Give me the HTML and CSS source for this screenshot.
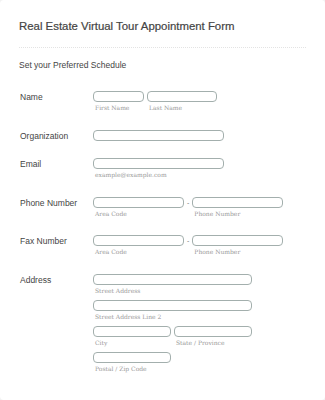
FILE: index.html
```html
<!DOCTYPE html>
<html lang="en">
<head>
  <meta charset="UTF-8">
  <title>Real Estate Virtual Tour Appointment Form</title>
  <link rel="stylesheet" href="styles.css">
</head>
<body>
  <div class="form-card">
    <h1 class="form-title">Real Estate Virtual Tour Appointment Form</h1>
    <hr class="divider">
    <p class="section-title">Set your Preferred Schedule</p>

    <div class="field">
      <label class="label">Name</label>
      <div class="inputs">
        <div class="line">
          <div class="sub">
            <span class="box w50"></span>
            <span class="hint">First Name</span>
          </div>
          <div class="sub">
            <span class="box w70"></span>
            <span class="hint">Last Name</span>
          </div>
        </div>
      </div>
    </div>

    <div class="field">
      <label class="label">Organization</label>
      <div class="inputs">
        <span class="box w130"></span>
      </div>
    </div>

    <div class="field">
      <label class="label">Email</label>
      <div class="inputs">
        <div class="sub">
          <span class="box w130"></span>
          <span class="hint">example@example.com</span>
        </div>
      </div>
    </div>

    <div class="field">
      <label class="label">Phone Number</label>
      <div class="inputs">
        <div class="line">
          <div class="sub">
            <span class="box w90"></span>
            <span class="hint">Area Code</span>
          </div>
          <span class="dash">-</span>
          <div class="sub">
            <span class="box w90"></span>
            <span class="hint">Phone Number</span>
          </div>
        </div>
      </div>
    </div>

    <div class="field">
      <label class="label">Fax Number</label>
      <div class="inputs">
        <div class="line">
          <div class="sub">
            <span class="box w90"></span>
            <span class="hint">Area Code</span>
          </div>
          <span class="dash">-</span>
          <div class="sub">
            <span class="box w90"></span>
            <span class="hint">Phone Number</span>
          </div>
        </div>
      </div>
    </div>

    <div class="field">
      <label class="label">Address</label>
      <div class="inputs address">
        <div class="sub">
          <span class="box w158"></span>
          <span class="hint">Street Address</span>
        </div>
        <div class="sub">
          <span class="box w158"></span>
          <span class="hint">Street Address Line 2</span>
        </div>
        <div class="line">
          <div class="sub">
            <span class="box w77"></span>
            <span class="hint">City</span>
          </div>
          <div class="sub">
            <span class="box w77"></span>
            <span class="hint">State / Province</span>
          </div>
        </div>
        <div class="sub">
          <span class="box w77"></span>
          <span class="hint">Postal / Zip Code</span>
        </div>
      </div>
    </div>
  </div>
</body>
</html>
```

FILE: styles.css
```css
body {
  margin: 0;
  background: #f2f2f2;
  font-family: "Liberation Sans", Arial, sans-serif;
  color: #555;
}

.form-card {
  background: #fff;
  border-radius: 4px;
  min-height: 400px;
  padding: 18px 19px 0 19px;
  box-sizing: border-box;
}

.form-title {
  margin: 0;
  font-size: 11.4px;
  font-weight: normal;
  line-height: 16px;
  color: #444;
  -webkit-text-stroke: 0.2px #444;
}

.divider {
  border: none;
  border-top: 1px dotted #e3e3e3;
  margin: 13px 0 11px 0;
}

.section-title {
  margin: 0 0 20px 0;
  font-size: 8.5px;
  line-height: 12px;
  color: #444;
}

.field {
  display: flex;
  margin-bottom: 16.6px;
}

.label {
  width: 73px;
  flex-shrink: 0;
  padding-left: 1px;
  font-size: 8.5px;
  line-height: 11px;
  padding-top: 1px;
  color: #444;
}

.inputs {
  display: flex;
  flex-direction: column;
}

.inputs.address {
  gap: 4px;
}

.line {
  display: flex;
  gap: 3px;
}

.sub {
  display: flex;
  flex-direction: column;
}

.box {
  display: block;
  height: 11px;
  box-sizing: border-box;
  border: 1px solid #a3afad;
  border-radius: 4px;
  background: #fff;
}

.w50 { width: 51px; }
.w70 { width: 70px; }
.w77 { width: 78px; }
.w90 { width: 91px; }
.w130 { width: 131px; }
.w158 { width: 159px; }

.hint {
  font-family: "DejaVu Serif", serif;
  font-size: 6px;
  line-height: 11px;
  padding-left: 2px;
  color: #9a9a9a;
}

.dash {
  font-size: 7px;
  line-height: 11px;
  color: #777;
}
```
